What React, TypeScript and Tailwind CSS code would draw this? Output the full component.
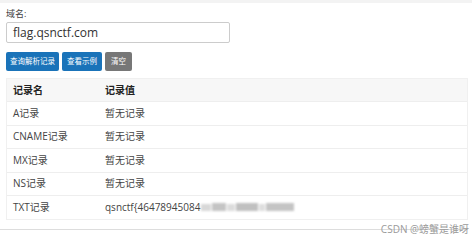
const rows = [
  { name: "A记录", value: "暂无记录" },
  { name: "CNAME记录", value: "暂无记录" },
  { name: "MX记录", value: "暂无记录" },
  { name: "NS记录", value: "暂无记录" },
];

function App() {
  return (
    <div
      className="w-[474px] h-[240px] bg-white text-[#333] overflow-hidden relative"
      style={{ fontFamily: '"Open Sans", "Noto Sans CJK SC", sans-serif' }}
    >
      <div className="h-[3px] w-[472px] bg-[#f3f3f3]" />
      <div className="pl-[6px] pt-[5px]">
        <div className="text-[9px] leading-[12px] text-[#444]">域名:</div>
        <div className="mt-[2px] w-[224px] h-[21px] border border-[#ccc] rounded-[2px] flex items-center px-[6px] text-[12px] text-[#333]">
          flag.qsnctf.com
        </div>
        <div className="mt-[9px] flex gap-[3px]">
          <button className="h-[19px] w-[53px] bg-[#1a73b9] text-white text-[7.5px] rounded-[2px]">
            查询解析记录
          </button>
          <button className="h-[19px] w-[40px] bg-[#1a73b9] text-white text-[7.5px] rounded-[2px]">
            查看示例
          </button>
          <button className="h-[19px] w-[27px] bg-[#777] text-white text-[7.5px] rounded-[2px]">
            清空
          </button>
        </div>
        <div className="mt-[7px] w-[462px] border border-[#f0f0f0] text-[10px]">
          <div className="flex h-[22px] items-center bg-[#f7f7f7] font-bold text-[#222]">
            <div className="w-[98px] pl-[6px]">记录名</div>
            <div>记录值</div>
          </div>
          {rows.map((r) => (
            <div key={r.name} className="flex h-[23.5px] items-center border-t border-[#eee] text-[#444]">
              <div className="w-[98px] pl-[6px]">{r.name}</div>
              <div>{r.value}</div>
            </div>
          ))}
          <div className="flex h-[23.5px] items-center border-t border-[#eee] text-[#444]">
            <div className="w-[98px] pl-[6px]">TXT记录</div>
            <div className="flex items-center">
              <span>qsnctf{"{"}46478945084</span>
              <div className="flex items-center gap-[1px] blur-[1px] ml-[1px]">
                <div className="w-[10px] h-[7px] bg-[#d8d8d8]" />
                <div className="w-[14px] h-[8px] bg-[#c4c4c4]" />
                <div className="w-[8px] h-[7px] bg-[#dcdcdc]" />
                <div className="w-[22px] h-[8px] bg-[#c0c0c0]" />
                <div className="w-[6px] h-[7px] bg-[#dedede]" />
                <div className="w-[28px] h-[8px] bg-[#c4c4c4]" />
              </div>
            </div>
          </div>
        </div>
      </div>
      <div className="mt-[9px] w-[468px] h-px bg-[#ddd]" />
      <div className="absolute right-[5px] bottom-[3px] text-[10px] text-[#9a9a9a]">
        CSDN @螃蟹是谁呀
      </div>
    </div>
  );
}

export default App;
